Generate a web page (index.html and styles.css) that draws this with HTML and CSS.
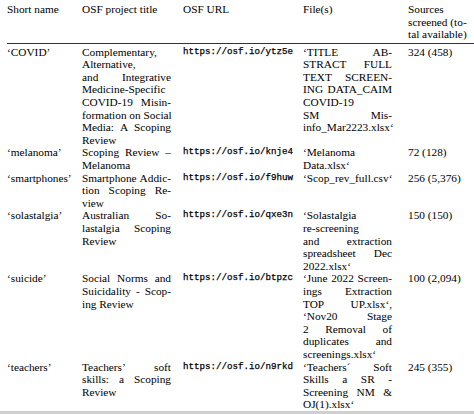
FILE: index.html
```html
<!DOCTYPE html>
<html>
<head>
<meta charset="utf-8">
<link rel="stylesheet" href="styles.css">
</head>
<body>
<table class="tbl">
  <colgroup>
    <col class="c1"><col class="c2"><col class="c3"><col class="c4"><col class="c5">
  </colgroup>
  <thead>
    <tr>
      <th>Short name</th>
      <th>OSF project title</th>
      <th>OSF URL</th>
      <th>File(s)</th>
      <th><span class="l">Sources</span><span class="l">screened (to-</span><span class="l">tal available)</span></th>
    </tr>
  </thead>
  <tbody>
    <tr class="first">
      <td>‘COVID’</td>
      <td><div class="p"><span class="l">Complementary,</span><span class="l">Alternative,</span><span class="l j">and Integrative</span><span class="l">Medicine-Specific</span><span class="l j">COVID-19 Misin-</span><span class="l j">formation on Social</span><span class="l j">Media: A Scoping</span><span class="l">Review</span></div></td>
      <td class="tt">https://osf.io/ytz5e</td>
      <td><div class="p"><span class="l j">‘TITLE AB-</span><span class="l j">STRACT FULL</span><span class="l j">TEXT SCREEN-</span><span class="l j">ING DATA_CAIM</span><span class="l">COVID-19</span><span class="l j">SM Mis-</span><span class="l">info_Mar2223.xlsx‘</span></div></td>
      <td>324 (458)</td>
    </tr>
    <tr>
      <td>‘melanoma’</td>
      <td><div class="p"><span class="l j">Scoping Review –</span><span class="l">Melanoma</span></div></td>
      <td class="tt">https://osf.io/knje4</td>
      <td><div class="p"><span class="l">‘Melanoma</span><span class="l">Data.xlsx‘</span></div></td>
      <td>72 (128)</td>
    </tr>
    <tr>
      <td>‘smartphones’</td>
      <td><div class="p"><span class="l j">Smartphone Addic-</span><span class="l j">tion Scoping Re-</span><span class="l">view</span></div></td>
      <td class="tt">https://osf.io/f9huw</td>
      <td><div class="p"><span class="l">‘Scop_rev_full.csv‘</span></div></td>
      <td>256 (5,376)</td>
    </tr>
    <tr>
      <td>‘solastalgia’</td>
      <td><div class="p"><span class="l j">Australian So-</span><span class="l j">lastalgia Scoping</span><span class="l">Review</span></div></td>
      <td class="tt">https://osf.io/qxe3n</td>
      <td><div class="p"><span class="l">‘Solastalgia</span><span class="l">re-screening</span><span class="l j">and extraction</span><span class="l j">spreadsheet Dec</span><span class="l">2022.xlsx‘</span></div></td>
      <td>150 (150)</td>
    </tr>
    <tr>
      <td>‘suicide’</td>
      <td><div class="p"><span class="l j">Social Norms and</span><span class="l j">Suicidality - Scop-</span><span class="l">ing Review</span></div></td>
      <td class="tt">https://osf.io/btpzc</td>
      <td><div class="p"><span class="l j">‘June 2022 Screen-</span><span class="l j">ings Extraction</span><span class="l j">TOP UP.xlsx‘,</span><span class="l j">‘Nov20 Stage</span><span class="l j">2 Removal of</span><span class="l j">duplicates and</span><span class="l">screenings.xlsx‘</span></div></td>
      <td>100 (2,094)</td>
    </tr>
    <tr>
      <td>‘teachers’</td>
      <td><div class="p"><span class="l j">Teachers’ soft</span><span class="l j">skills: a Scoping</span><span class="l">Review</span></div></td>
      <td class="tt">https://osf.io/n9rkd</td>
      <td><div class="p"><span class="l j">‘Teachers´ Soft</span><span class="l j">Skills a SR -</span><span class="l j">Screening NM &amp;</span><span class="l">OJ(1).xlsx‘</span></div></td>
      <td>245 (355)</td>
    </tr>
  </tbody>
</table>
<div class="edge"></div>
</body>
</html>
```
FILE: styles.css
```css
html, body {
  margin: 0;
  padding: 0;
  background: #ffffff;
}
body {
  width: 474px;
  height: 414px;
  overflow: hidden;
  padding-left: 7px;
  box-sizing: border-box;
  font-family: "Liberation Serif", "DejaVu Serif", serif;
  font-size: 11.3px;
  line-height: 12.6px;
  color: #000000;
}
.tbl {
  border-collapse: collapse;
  border-spacing: 0;
  table-layout: fixed;
  width: 467px;
}
.c1 { width: 75px; }
.c2 { width: 101px; }
.c3 { width: 120px; }
.c4 { width: 105px; }
.c5 { width: 66px; }
.tbl th, .tbl td {
  padding: 0;
  text-align: left;
  vertical-align: top;
  font-weight: normal;
  white-space: nowrap;
}
.tbl th {
  padding-top: 3px;
  padding-bottom: 2.2px;
  border-bottom: 1px solid #333333;
}
.tbl tr.first td {
  padding-top: 1.7px;
}
.p {
  width: 89px;
}
.l {
  display: block;
  white-space: nowrap;
}
.j {
  text-align: justify;
  text-align-last: justify;
}
.tt {
  font-family: "Liberation Mono", "DejaVu Sans Mono", monospace;
  font-size: 9.17px;
  -webkit-text-stroke: 0.25px #000000;
}
.edge {
  margin-left: -7px;
  width: 474px;
  height: 4px;
  background: #cfcfcf;
}
```
